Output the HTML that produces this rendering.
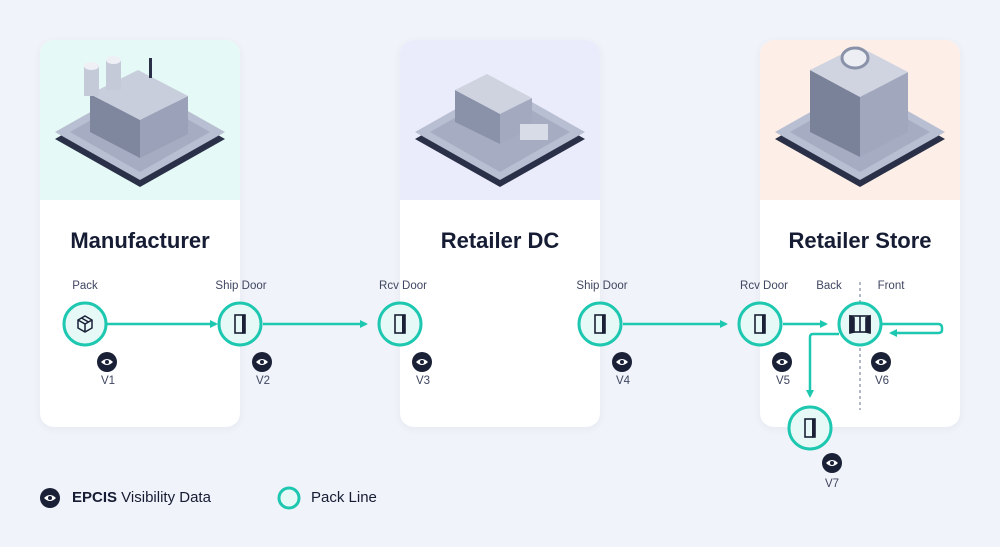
<!DOCTYPE html>
<html><head><meta charset="utf-8"><style>
body{margin:0;width:1000px;height:547px;background:#f1f3fa;font-family:"Liberation Sans",sans-serif;position:relative;overflow:hidden}
.card{position:absolute;top:40px;width:200px;height:387px;background:#fff;border-radius:14px;overflow:hidden;box-shadow:0 2px 8px rgba(60,70,120,.06)}
.img{height:160px}
.t{position:absolute;top:188px;width:100%;text-align:center;font-size:22px;font-weight:bold;color:#151c33}
.lab{position:absolute;font-size:11.5px;color:#3f4660;transform:translateX(-50%);white-space:nowrap}
svg.o{position:absolute;left:0;top:0}
</style></head><body>
<div class="card" style="left:40px"><div class="img" style="background:#e5f9f6"></div><div class="t">Manufacturer</div></div>
<div class="card" style="left:400px"><div class="img" style="background:#ebecfb"></div><div class="t">Retailer DC</div></div>
<div class="card" style="left:760px"><div class="img" style="background:#fdeee8"></div><div class="t">Retailer Store</div></div>

<div class="lab" style="left:85px;top:280px">Pack</div>
<div class="lab" style="left:241px;top:280px">Ship Door</div>
<div class="lab" style="left:403px;top:280px">Rcv Door</div>
<div class="lab" style="left:602px;top:280px">Ship Door</div>
<div class="lab" style="left:764px;top:280px">Rcv Door</div>
<div class="lab" style="left:829px;top:280px">Back</div>
<div class="lab" style="left:891px;top:280px">Front</div>
<div class="lab" style="left:108px;top:375px">V1</div>
<div class="lab" style="left:263px;top:375px">V2</div>
<div class="lab" style="left:423px;top:375px">V3</div>
<div class="lab" style="left:623px;top:375px">V4</div>
<div class="lab" style="left:783px;top:375px">V5</div>
<div class="lab" style="left:882px;top:375px">V6</div>
<div class="lab" style="left:832px;top:478px">V7</div>
<div style="position:absolute;left:72px;top:489px;font-size:15px;color:#151c33"><b>EPCIS</b> Visibility Data</div>
<div style="position:absolute;left:311px;top:489px;font-size:15px;color:#151c33">Pack Line</div>

<svg class="o" width="1000" height="547" viewBox="0 0 1000 547">
<defs>
<g id="plat">
<polygon points="-85,0 0,-48 85,0 0,48" transform="translate(0,7)" fill="#2a3047"/>
<polygon points="-85,0 0,-48 85,0 0,48" fill="#b9bfd2"/>
<polygon points="-70,0 0,-40 70,0 0,40" fill="#a6adc3"/>
</g>
<g id="eye"><circle r="10" fill="#1a2036"/><path d="M-6,0 Q0,-6 6,0 Q0,6 -6,0Z" fill="#fff"/><circle r="2" fill="#1a2036"/></g>
<g id="door"><rect x="-5" y="-9" width="10" height="18" fill="none" stroke="#1a2036" stroke-width="1.6"/><polygon points="2,-9 5,-9 5,9 2,10" fill="#1a2036"/></g>
<marker id="ar" markerWidth="8" markerHeight="8" refX="6" refY="4" orient="auto" markerUnits="userSpaceOnUse"><path d="M0,0 L8,4 L0,8Z" fill="#1ec8b0"/></marker>
</defs>
<g transform="translate(140,132)"><use href="#plat"/>
<polygon points="-50,0 0,26 0,-12 -50,-38" fill="#7f879f"/><polygon points="0,26 48,2 48,-36 0,-12" fill="#9aa1b8"/>
<polygon points="-50,-38 0,-12 48,-36 -2,-62" fill="#c9cedd"/>
<rect x="-56" y="-66" width="15" height="30" fill="#c5cad9"/><ellipse cx="-48.5" cy="-66" rx="7.5" ry="4" fill="#eef0f6"/>
<rect x="-34" y="-72" width="15" height="30" fill="#c5cad9"/><ellipse cx="-26.5" cy="-72" rx="7.5" ry="4" fill="#eef0f6"/>
<rect x="9" y="-74" width="3" height="20" fill="#2a3047"/></g>
<g transform="translate(500,132)"><use href="#plat"/>
<polygon points="-45,-10 0,12 0,-18 -45,-42" fill="#8a92a9"/><polygon points="0,12 32,-4 32,-34 0,-18" fill="#a3aac0"/>
<polygon points="-45,-42 0,-18 32,-34 -13,-58" fill="#cfd3e0"/>
<rect x="20" y="-8" width="28" height="16" fill="#d8dce7"/></g>
<g transform="translate(860,132)"><use href="#plat"/>
<polygon points="-50,0 0,25 0,-35 -50,-62" fill="#7a829a"/><polygon points="0,25 48,0 48,-60 0,-35" fill="#a1a8be"/>
<polygon points="-50,-62 0,-35 48,-60 -2,-86" fill="#d0d4e1"/>
<ellipse cx="-5" cy="-74" rx="13" ry="10" fill="#eceef4" stroke="#8a92a9" stroke-width="3"/></g>

<line x1="860" y1="282" x2="860" y2="410" stroke="#9aa0b5" stroke-width="1.5" stroke-dasharray="3,3"/>
<g stroke="#1ec8b0" stroke-width="2.5" fill="none">
<line x1="107" y1="324" x2="216" y2="324" marker-end="url(#ar)"/>
<line x1="263" y1="324" x2="366" y2="324" marker-end="url(#ar)"/>
<line x1="623" y1="324" x2="726" y2="324" marker-end="url(#ar)"/>
<line x1="783" y1="324" x2="826" y2="324" marker-end="url(#ar)"/>
<path d="M882,324 H938 Q942,324 942,328 V330 Q942,333 938,333 H891" marker-end="url(#ar)"/>
<path d="M839,334 H813 Q810,334 810,337 V396" marker-end="url(#ar)"/>
</g>
<g fill="#e6f9f6" stroke="#1ec8b0" stroke-width="3">
<circle cx="85" cy="324" r="21"/><circle cx="240" cy="324" r="21"/><circle cx="400" cy="324" r="21"/>
<circle cx="600" cy="324" r="21"/><circle cx="760" cy="324" r="21"/><circle cx="860" cy="324" r="21"/><circle cx="810" cy="428" r="21"/>
<circle cx="289" cy="498" r="10"/>
</g>
<g transform="translate(85,324)" fill="none" stroke="#1a2036" stroke-width="1.5"><path d="M0,-8 L7,-4 V4 L0,8 L-7,4 V-4Z M-7,-4 L0,0 L7,-4 M0,0 V8 M-3.5,-6 L3.5,-2"/></g>
<use href="#door" x="240" y="324"/><use href="#door" x="400" y="324"/><use href="#door" x="600" y="324"/><use href="#door" x="760" y="324"/><use href="#door" x="810" y="428"/>
<g transform="translate(860,324)" fill="none" stroke="#1a2036" stroke-width="1.6"><rect x="-10" y="-8" width="20" height="16"/><line x1="0" y1="-8" x2="0" y2="8"/><polygon points="-10,-8 -6,-6 -6,8 -10,9" fill="#1a2036"/><polygon points="10,-8 6,-6 6,8 10,9" fill="#1a2036"/></g>
<use href="#eye" x="107" y="362"/><use href="#eye" x="262" y="362"/><use href="#eye" x="422" y="362"/><use href="#eye" x="622" y="362"/><use href="#eye" x="782" y="362"/><use href="#eye" x="881" y="362"/><use href="#eye" x="832" y="463"/><use href="#eye" x="50" y="498"/>
</svg>
</body></html>
